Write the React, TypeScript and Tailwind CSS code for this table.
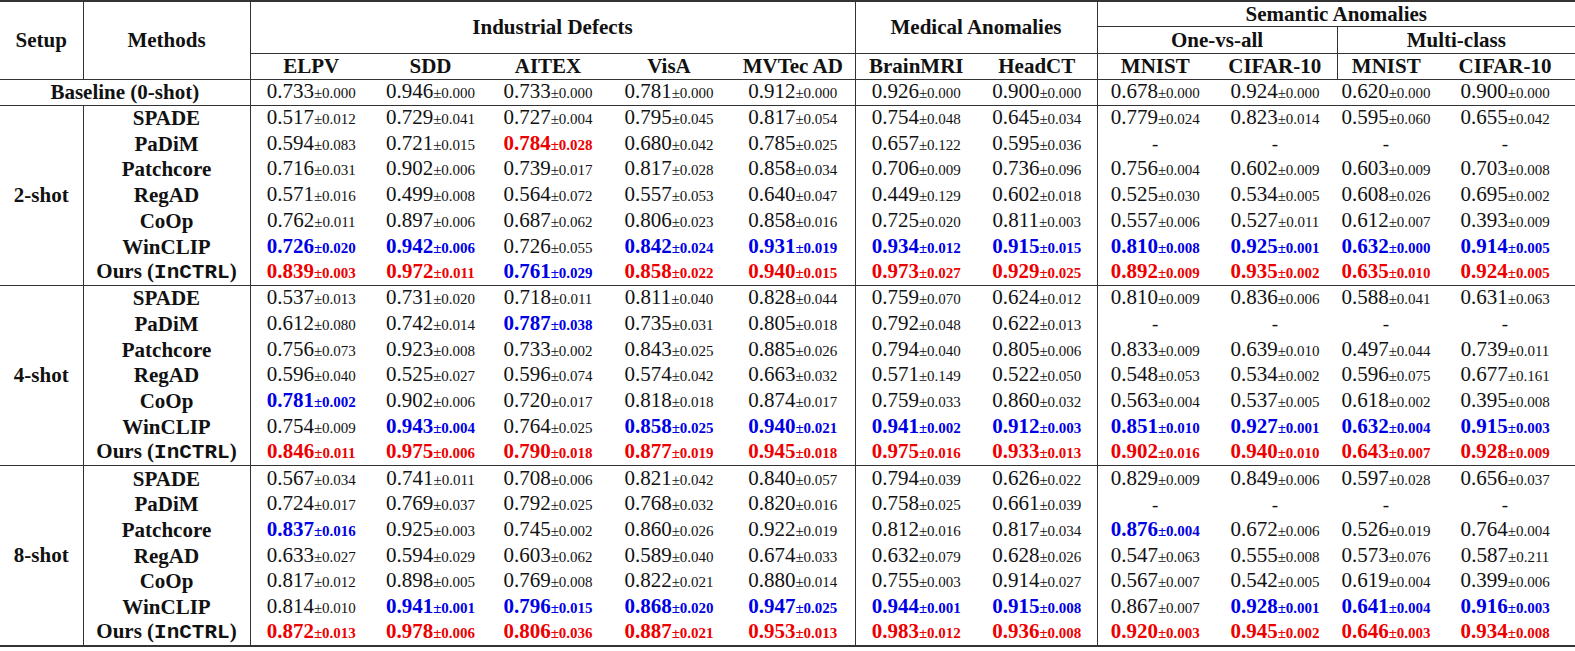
import React from "react";

type Row = [string, string[]];
type Group = { label: string; rows: Row[] };

const DASH = ["-", "-", "-", "-"];

const baseline = [
  "0.733±0.000", "0.946±0.000", "0.733±0.000", "0.781±0.000", "0.912±0.000",
  "0.926±0.000", "0.900±0.000", "0.678±0.000", "0.924±0.000", "0.620±0.000", "0.900±0.000",
];

const groups: Group[] = [
  {
    label: "2-shot",
    rows: [
      ["SPADE", ["0.517±0.012", "0.729±0.041", "0.727±0.004", "0.795±0.045", "0.817±0.054", "0.754±0.048", "0.645±0.034", "0.779±0.024", "0.823±0.014", "0.595±0.060", "0.655±0.042"]],
      ["PaDiM", ["0.594±0.083", "0.721±0.015", "r0.784±0.028", "0.680±0.042", "0.785±0.025", "0.657±0.122", "0.595±0.036", ...DASH]],
      ["Patchcore", ["0.716±0.031", "0.902±0.006", "0.739±0.017", "0.817±0.028", "0.858±0.034", "0.706±0.009", "0.736±0.096", "0.756±0.004", "0.602±0.009", "0.603±0.009", "0.703±0.008"]],
      ["RegAD", ["0.571±0.016", "0.499±0.008", "0.564±0.072", "0.557±0.053", "0.640±0.047", "0.449±0.129", "0.602±0.018", "0.525±0.030", "0.534±0.005", "0.608±0.026", "0.695±0.002"]],
      ["CoOp", ["0.762±0.011", "0.897±0.006", "0.687±0.062", "0.806±0.023", "0.858±0.016", "0.725±0.020", "0.811±0.003", "0.557±0.006", "0.527±0.011", "0.612±0.007", "0.393±0.009"]],
      ["WinCLIP", ["b0.726±0.020", "b0.942±0.006", "0.726±0.055", "b0.842±0.024", "b0.931±0.019", "b0.934±0.012", "b0.915±0.015", "b0.810±0.008", "b0.925±0.001", "b0.632±0.000", "b0.914±0.005"]],
      ["OURS", ["r0.839±0.003", "r0.972±0.011", "b0.761±0.029", "r0.858±0.022", "r0.940±0.015", "r0.973±0.027", "r0.929±0.025", "r0.892±0.009", "r0.935±0.002", "r0.635±0.010", "r0.924±0.005"]],
    ],
  },
  {
    label: "4-shot",
    rows: [
      ["SPADE", ["0.537±0.013", "0.731±0.020", "0.718±0.011", "0.811±0.040", "0.828±0.044", "0.759±0.070", "0.624±0.012", "0.810±0.009", "0.836±0.006", "0.588±0.041", "0.631±0.063"]],
      ["PaDiM", ["0.612±0.080", "0.742±0.014", "b0.787±0.038", "0.735±0.031", "0.805±0.018", "0.792±0.048", "0.622±0.013", ...DASH]],
      ["Patchcore", ["0.756±0.073", "0.923±0.008", "0.733±0.002", "0.843±0.025", "0.885±0.026", "0.794±0.040", "0.805±0.006", "0.833±0.009", "0.639±0.010", "0.497±0.044", "0.739±0.011"]],
      ["RegAD", ["0.596±0.040", "0.525±0.027", "0.596±0.074", "0.574±0.042", "0.663±0.032", "0.571±0.149", "0.522±0.050", "0.548±0.053", "0.534±0.002", "0.596±0.075", "0.677±0.161"]],
      ["CoOp", ["b0.781±0.002", "0.902±0.006", "0.720±0.017", "0.818±0.018", "0.874±0.017", "0.759±0.033", "0.860±0.032", "0.563±0.004", "0.537±0.005", "0.618±0.002", "0.395±0.008"]],
      ["WinCLIP", ["0.754±0.009", "b0.943±0.004", "0.764±0.025", "b0.858±0.025", "b0.940±0.021", "b0.941±0.002", "b0.912±0.003", "b0.851±0.010", "b0.927±0.001", "b0.632±0.004", "b0.915±0.003"]],
      ["OURS", ["r0.846±0.011", "r0.975±0.006", "r0.790±0.018", "r0.877±0.019", "r0.945±0.018", "r0.975±0.016", "r0.933±0.013", "r0.902±0.016", "r0.940±0.010", "r0.643±0.007", "r0.928±0.009"]],
    ],
  },
  {
    label: "8-shot",
    rows: [
      ["SPADE", ["0.567±0.034", "0.741±0.011", "0.708±0.006", "0.821±0.042", "0.840±0.057", "0.794±0.039", "0.626±0.022", "0.829±0.009", "0.849±0.006", "0.597±0.028", "0.656±0.037"]],
      ["PaDiM", ["0.724±0.017", "0.769±0.037", "0.792±0.025", "0.768±0.032", "0.820±0.016", "0.758±0.025", "0.661±0.039", ...DASH]],
      ["Patchcore", ["b0.837±0.016", "0.925±0.003", "0.745±0.002", "0.860±0.026", "0.922±0.019", "0.812±0.016", "0.817±0.034", "b0.876±0.004", "0.672±0.006", "0.526±0.019", "0.764±0.004"]],
      ["RegAD", ["0.633±0.027", "0.594±0.029", "0.603±0.062", "0.589±0.040", "0.674±0.033", "0.632±0.079", "0.628±0.026", "0.547±0.063", "0.555±0.008", "0.573±0.076", "0.587±0.211"]],
      ["CoOp", ["0.817±0.012", "0.898±0.005", "0.769±0.008", "0.822±0.021", "0.880±0.014", "0.755±0.003", "0.914±0.027", "0.567±0.007", "0.542±0.005", "0.619±0.004", "0.399±0.006"]],
      ["WinCLIP", ["0.814±0.010", "b0.941±0.001", "b0.796±0.015", "b0.868±0.020", "b0.947±0.025", "b0.944±0.001", "b0.915±0.008", "0.867±0.007", "b0.928±0.001", "b0.641±0.004", "b0.916±0.003"]],
      ["OURS", ["r0.872±0.013", "r0.978±0.006", "r0.806±0.036", "r0.887±0.021", "r0.953±0.013", "r0.983±0.012", "r0.936±0.008", "r0.920±0.003", "r0.945±0.002", "r0.646±0.003", "r0.934±0.008"]],
    ],
  },
];

const colWidths = [
  "w-[83px]", "w-[167px]", "w-[122px]", "w-[117px]", "w-[118px]", "w-[124px]", "w-[124px]",
  "w-[122px]", "w-[120px]", "w-[116px]", "w-[124px]", "w-[98px]", "w-[140px]",
];

function Val({ v }: { v: string }) {
  if (v === "-") return <span className="text-[19px]">-</span>;
  let cls = "";
  let s = v;
  if (v[0] === "r") {
    cls = "font-bold text-[#ee0000]";
    s = v.slice(1);
  } else if (v[0] === "b") {
    cls = "font-bold text-[#0000e6]";
    s = v.slice(1);
  }
  const [main, sd] = s.split("±");
  return (
    <span className={cls}>
      {main}
      <span className="text-[15px]">±{sd}</span>
    </span>
  );
}

function Method({ name }: { name: string }) {
  if (name === "OURS")
    return (
      <span>
        Ours (<span className="[font-family:Liberation_Mono,monospace] font-bold">InCTRL</span>)
      </span>
    );
  return <span>{name}</span>;
}

// which data column indices have a right border (MVTec=4, HeadCT=6)
const rightBorder = (i: number) => i === 4 || i === 6;

export default function App() {
  const L = "border-[#333]";
  return (
    <div className="w-[1575px] h-[651px] bg-white text-[#111] text-[21px] leading-[22px] [font-family:Liberation_Serif,serif]">
      <table className="table-fixed border-collapse w-[1575px] border-t-2 border-b-2 border-[#333] [font-family:Liberation_Serif,serif]">
        <colgroup>
          {colWidths.map((w, i) => (
            <col key={i} className={w} />
          ))}
        </colgroup>
        <thead>
          <tr className="h-[25px]">
            <th rowSpan={3} className={`font-bold text-center align-middle border-r border-b ${L}`}>Setup</th>
            <th rowSpan={3} className={`font-bold text-center align-middle border-r border-b ${L}`}>Methods</th>
            <th colSpan={5} rowSpan={2} className={`font-bold text-center align-middle border-r border-b ${L}`}>Industrial Defects</th>
            <th colSpan={2} rowSpan={2} className={`font-bold text-center align-middle border-r border-b ${L}`}>Medical Anomalies</th>
            <th colSpan={4} className={`font-bold text-center align-middle border-b ${L}`}>Semantic Anomalies</th>
          </tr>
          <tr className="h-[27px]">
            <th colSpan={2} className={`font-bold text-center align-middle border-r border-b ${L}`}>One-vs-all</th>
            <th colSpan={2} className={`font-bold text-center align-middle border-b ${L}`}>Multi-class</th>
          </tr>
          <tr className="h-[26px]">
            {["ELPV", "SDD", "AITEX", "VisA", "MVTec AD", "BrainMRI", "HeadCT", "MNIST", "CIFAR-10", "MNIST", "CIFAR-10"].map((h, i) => (
              <th
                key={i}
                className={`font-bold text-center align-middle border-b ${L} ${rightBorder(i) || i === 8 ? "border-r" : ""}`}
              >
                {h}
              </th>
            ))}
          </tr>
        </thead>
        <tbody>
          <tr className="h-[26px]">
            <td colSpan={2} className={`font-bold text-center border-r border-b ${L}`}>Baseline (0-shot)</td>
            {baseline.map((v, i) => (
              <td key={i} className={`text-center whitespace-nowrap border-b ${L} ${rightBorder(i) ? "border-r" : ""}`}>
                <Val v={v} />
              </td>
            ))}
          </tr>
          {groups.map((g) =>
            g.rows.map(([m, vals], ri) => {
              const last = ri === g.rows.length - 1;
              return (
                <tr key={g.label + ri} className="h-[25.75px]">
                  {ri === 0 && (
                    <td rowSpan={7} className={`font-bold text-center align-middle border-r border-b ${L}`}>
                      {g.label}
                    </td>
                  )}
                  <td className={`font-bold text-center whitespace-nowrap border-r ${L} ${last ? "border-b" : ""}`}>
                    <Method name={m} />
                  </td>
                  {vals.map((v, i) => (
                    <td
                      key={i}
                      className={`text-center whitespace-nowrap ${L} ${rightBorder(i) ? "border-r" : ""} ${last ? "border-b" : ""}`}
                    >
                      <Val v={v} />
                    </td>
                  ))}
                </tr>
              );
            })
          )}
        </tbody>
      </table>
    </div>
  );
}
